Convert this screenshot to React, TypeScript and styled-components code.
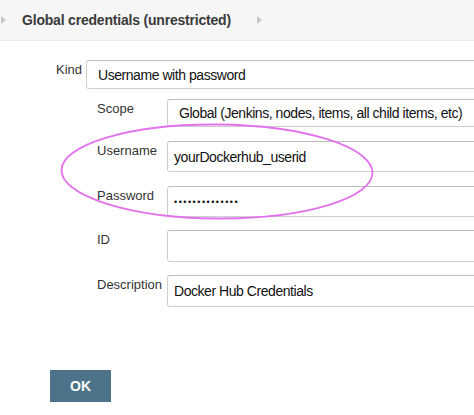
import React from 'react';
import styled, { createGlobalStyle } from 'styled-components';

const GlobalStyle = createGlobalStyle`
  html, body {
    margin: 0;
    padding: 0;
    background: #fff;
    overflow: hidden;
  }
  body {
    font-family: "Liberation Sans", Arial, sans-serif;
    color: #333;
  }
`;

type Field = {
  label: string;
  value: string;
  kind: 'select' | 'text';
  height: number;
  gap: number;
};

const fields: Field[] = [
  { label: 'Scope', value: 'Global (Jenkins, nodes, items, all child items, etc)', kind: 'select', height: 28, gap: 10 },
  { label: 'Username', value: 'yourDockerhub_userid', kind: 'text', height: 31, gap: 14 },
  { label: 'Password', value: '••••••••••••••', kind: 'text', height: 31, gap: 14 },
  { label: 'ID', value: '', kind: 'text', height: 32, gap: 13 },
  { label: 'Description', value: 'Docker Hub Credentials', kind: 'text', height: 32, gap: 13 },
];

const Arrow: React.FC = () => (
  <svg width="5" height="8" viewBox="0 0 5 8">
    <path d="M0 0 L5 4 L0 8 Z" fill="#c8c8c8" />
  </svg>
);

const App: React.FC = () => {
  return (
    <>
      <GlobalStyle />
      <Page>
        <Breadcrumb>
          <Arrow />
          <Title>Global credentials (unrestricted)</Title>
          <Arrow />
        </Breadcrumb>
        <Form>
          <Row $labelWidth={30} $top={0}>
            <Label>Kind</Label>
            <Box $height={29} $pad={11}>Username with password</Box>
          </Row>
          <Nested>
            {fields.map(f => (
              <Row key={f.label} $labelWidth={70} $top={f.gap}>
                <Label>{f.label}</Label>
                <Box $height={f.height} $pad={f.kind === 'select' ? 11 : 6} $dots={f.label === 'Password'}>
                  {f.value}
                </Box>
              </Row>
            ))}
          </Nested>
          <Ring viewBox="0 0 320 100" width="320" height="100">
            <ellipse cx="160" cy="48.5" rx="155.5" ry="47" fill="none" stroke="#e272ea" strokeWidth="1.8" transform="rotate(0.5 160 50)" />
          </Ring>
        </Form>
        <Actions>
          <OkButton>OK</OkButton>
        </Actions>
      </Page>
    </>
  );
};

const Page = styled.div`
  width: 474px;
  height: 415px;
  position: relative;
`;

const Breadcrumb = styled.div`
  height: 40px;
  background: #f6f6f6;
  border-bottom: 1px solid #e8e8e8;
  display: flex;
  align-items: center;
  padding-left: 1px;

  > svg:last-child {
    margin-left: 26px;
  }
`;

const Title = styled.div`
  margin-left: 16px;
  font-size: 14px;
  font-weight: bold;
  letter-spacing: -0.2px;
  color: #3a3a3a;
`;

const Form = styled.div`
  position: relative;
  padding: 19px 0 0 56px;
`;

const Nested = styled.div`
  padding-left: 41px;
`;

const Row = styled.div<{ $labelWidth: number; $top: number }>`
  display: grid;
  grid-template-columns: ${p => p.$labelWidth}px 600px;
  align-items: start;
  margin-top: ${p => p.$top}px;
`;

const Label = styled.div`
  font-size: 13px;
  line-height: 16px;
  padding-top: 2px;
  color: #333;
  white-space: nowrap;
`;

const Box = styled.div<{ $height: number; $pad: number; $dots?: boolean }>`
  box-sizing: border-box;
  height: ${p => p.$height}px;
  border: 1px solid #cfcfcf;
  border-top-color: #bdbdbd;
  border-radius: 3px;
  background: #fff;
  display: flex;
  align-items: center;
  padding-left: ${p => p.$pad}px;
  font-size: ${p => (p.$dots ? 9 : 14)}px;
  letter-spacing: ${p => (p.$dots ? '1.5px' : '-0.45px')};
  color: #111;
  white-space: nowrap;
`;

const Ring = styled.svg`
  position: absolute;
  left: 57px;
  top: 82px;
  pointer-events: none;
`;

const Actions = styled.div`
  padding: 63px 0 0 50px;
`;

const OkButton = styled.button`
  width: 61px;
  height: 32px;
  border: none;
  border-radius: 0;
  background: #4c7389;
  color: #fff;
  font-family: "Liberation Sans", Arial, sans-serif;
  font-size: 14px;
  font-weight: bold;
  padding: 0;
`;

export default App;
